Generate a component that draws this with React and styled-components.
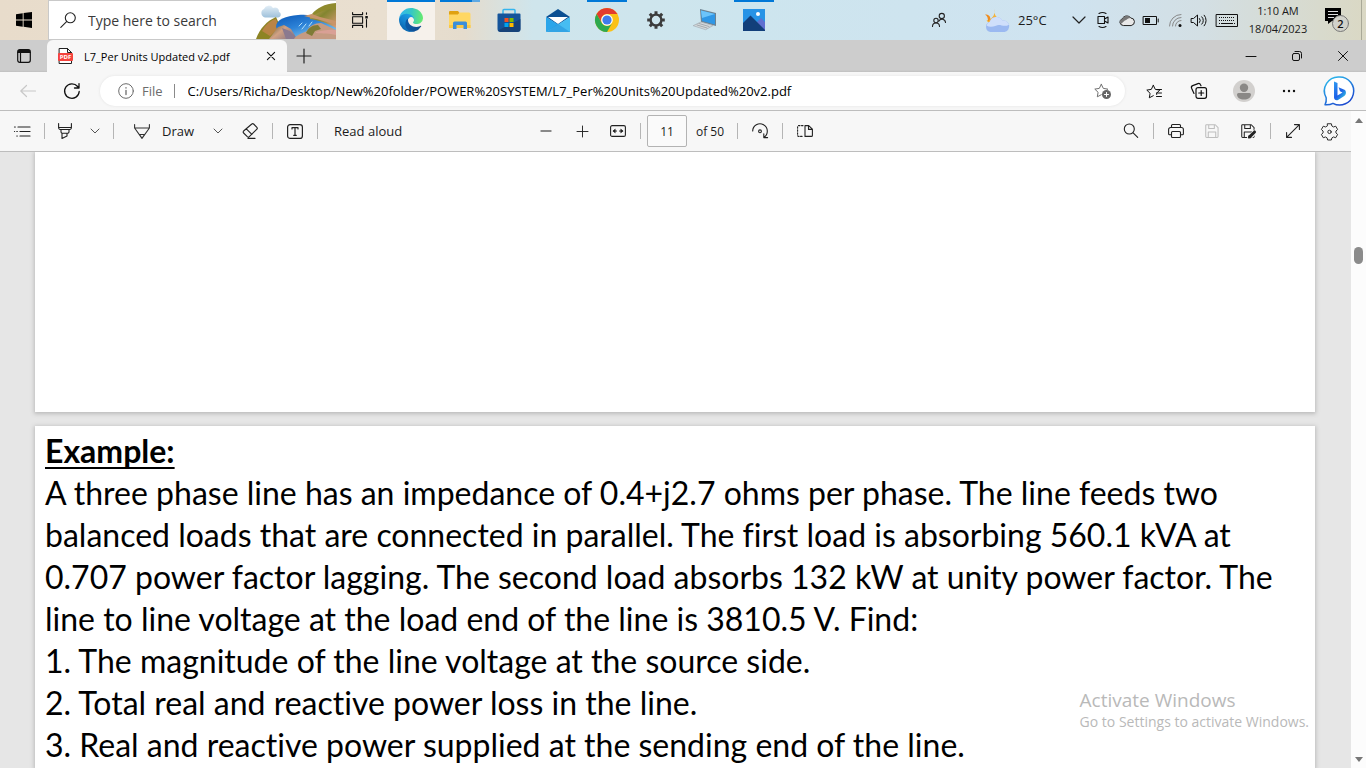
import React from "react";
import styled, { createGlobalStyle } from "styled-components";

const GlobalStyle = createGlobalStyle`
  body {
    margin: 0;
    overflow: hidden;
    font-family: "Open Sans", "Noto Sans", sans-serif;
    font-size: 12px;
    color: #1b1b1b;
  }
  button, input {
    font: inherit;
    color: inherit;
  }
`;

const Screen = styled.div`
  height: 100vh;
  display: flex;
  flex-direction: column;
`;

const Icon = styled.svg`
  display: block;
  flex: none;
  width: ${props => props.$w || 16}px;
  height: ${props => props.$h || props.$w || 16}px;
  fill: none;
  stroke: ${props => props.$color || "#222"};
  stroke-width: ${props => props.$stroke || 1};
  stroke-linecap: round;
  stroke-linejoin: round;
  overflow: visible;
`;

const PlainButton = styled.button`
  display: flex;
  align-items: center;
  justify-content: center;
  flex: none;
  border: 0;
  padding: 0;
  background: none;
`;

/* ---------- taskbar ---------- */

const Taskbar = styled.header`
  display: flex;
  flex: none;
  height: 40px;
  background: linear-gradient(
    90deg,
    #e8dccb 0%,
    #e9dfd0 28%,
    #e5dccd 34%,
    #cfe5ec 39%,
    #cde5ee 55%,
    #cfe3f0 78%,
    #d3dfe4 88%,
    #dad8c4 100%
  );
`;

const TaskCell = styled(PlainButton)`
  position: relative;
  width: ${props => props.$w || 48}px;
  height: 40px;
  background: ${props => (props.$active ? "#f6f1eb" : "none")};
  &::before {
    content: "";
    position: absolute;
    top: 0;
    left: ${props => (props.$active ? 0 : 4)}px;
    right: ${props => (props.$active ? 0 : 4)}px;
    height: 2px;
    background: ${props =>
      props.$stacked
        ? "linear-gradient(90deg, #0078d7 80%, #5ea9e4 80%)"
        : props.$active || props.$open
        ? "#0078d7"
        : "none"};
  }
`;

const SearchBox = styled.label`
  display: flex;
  align-items: center;
  box-sizing: border-box;
  width: 288px;
  height: 40px;
  border: 1px solid #c9c9c9;
  border-right: 0;
  padding-left: 11px;
  background: white;
`;

const SearchInput = styled.input`
  flex: 1;
  min-width: 0;
  margin-left: 12px;
  border: 0;
  padding: 0;
  outline: 0;
  background: none;
  font-size: 14px;
  &::placeholder {
    color: #3a3a3a;
    opacity: 1;
  }
`;

const Pinned = styled.nav`
  display: flex;
  gap: 1px;
  margin-left: 3px;
`;

const Tray = styled.div`
  display: flex;
  margin-left: auto;
`;

const Weather = styled(PlainButton)`
  gap: 8px;
  justify-content: flex-start;
  width: 87px;
  margin-left: 17px;
  padding-left: 5px;
  font-size: 13px;
`;

const Clock = styled.time`
  display: flex;
  flex-direction: column;
  justify-content: center;
  width: 70px;
  text-align: center;
  font-size: 11px;
  line-height: 18px;
`;

const Notifications = styled(TaskCell)`
  border-right: 1px solid #a9a998;
  margin-right: 4px;
`;

/* ---------- browser chrome ---------- */

const TabStrip = styled.div`
  display: flex;
  flex: none;
  height: 32px;
  background: linear-gradient(#cdcdcd 94%, #bfbfbf);
`;

const StripButton = styled(PlainButton)`
  width: ${props => props.$w || 46}px;
`;

const Tab = styled.div`
  display: flex;
  align-items: center;
  box-sizing: border-box;
  width: 240px;
  border-radius: 6px 6px 0 0;
  padding: 0 8px 0 11px;
  background: #f7f7f7;
`;

const TabTitle = styled.span`
  flex: 1;
  margin-left: 11px;
  color: black;
  font-size: 11px;
`;

const WindowButtons = styled.div`
  display: flex;
  margin-left: auto;
`;

const AddressRow = styled.div`
  display: flex;
  align-items: center;
  flex: none;
  box-sizing: border-box;
  height: 39px;
  border-bottom: 1px solid #bdbdbd;
  padding-left: 6px;
  background: #f7f7f7;
`;

const NavButton = styled(PlainButton)`
  width: ${props => props.$w || 45}px;
  height: 36px;
`;

const AddressPill = styled.label`
  display: flex;
  align-items: center;
  flex: 1;
  box-sizing: border-box;
  height: 30px;
  margin: 0 6px;
  border-radius: 15px;
  padding: 0 14px 0 18px;
  background: white;
  box-shadow: 0 0 3px #e2e2e2;
`;

const Scheme = styled.span`
  margin-left: 8px;
  border-right: 1px solid #8a8a8a;
  padding-right: 11px;
  color: #6c6c6c;
  font-size: 13px;
  line-height: 14px;
`;

const AddressInput = styled.input`
  flex: 1;
  min-width: 0;
  border: 0;
  padding: 0 0 0 13px;
  outline: 0;
  background: none;
  color: black;
  font-size: 13px;
`;

/* ---------- pdf viewer ---------- */

const Main = styled.main`
  position: relative;
  display: flex;
  flex: 1;
  min-height: 0;
`;

const Viewer = styled.section`
  display: flex;
  flex-direction: column;
  flex: 1;
  min-width: 0;
  background: #e6e6e6;
`;

const PdfToolbar = styled.div`
  position: relative;
  z-index: 1;
  display: grid;
  grid-template-columns: 1fr auto 1fr;
  flex: none;
  height: 40px;
  border-bottom: 1px solid #bdbdbd;
  padding: 0 4px;
  background: #f7f7f7;
`;

const ToolGroup = styled.div`
  display: flex;
  align-items: center;
  justify-content: ${props => props.$align || "flex-start"};
`;

const Tool = styled(PlainButton)`
  width: ${props => props.$w || 36}px;
  height: 32px;
`;

const TextTool = styled(PlainButton)`
  gap: 12px;
  height: 32px;
  padding: ${props => (props.$split ? "0 10px 0 16px" : "0 12px")};
  font-size: 13px;
`;

const Divider = styled.span`
  flex: none;
  width: 1px;
  height: 16px;
  margin: 0 4px;
  background: #b5b5b5;
`;

const PageInput = styled.input`
  box-sizing: border-box;
  width: 40px;
  height: 32px;
  margin-left: 2px;
  border: 1px solid #b3b3b3;
  border-radius: 2px;
  padding: 0;
  background: #fafafa;
  text-align: center;
`;

const PageCount = styled.span`
  width: 46px;
  text-align: center;
`;

const Pages = styled.div`
  display: flex;
  flex-direction: column;
  gap: 14px;
  flex: 1;
  min-height: 0;
  padding: 0 36px 0 35px;
`;

const Page = styled.article`
  box-sizing: border-box;
  flex: ${props => (props.$last ? "1 0 0" : "0 0 260px")};
  min-height: 0;
  padding: 4px 10px 0;
  background: white;
  box-shadow: 0 1px 4px 1px #bcbcbc;
  color: black;
  font-family: Lato, "Open Sans", sans-serif;
  font-size: 32px;
  font-variant-ligatures: none;
  line-height: 42px;
  white-space: nowrap;
`;

const Heading = styled.h1`
  margin: 0;
  font-size: inherit;
  text-decoration: underline;
  text-decoration-thickness: 2px;
  text-underline-offset: 4px;
  text-decoration-skip-ink: none;
`;

const Paragraph = styled.p`
  margin: 0;
`;

const Line = styled.span`
  display: block;
`;

const Scrollbar = styled.div`
  display: flex;
  flex-direction: column;
  align-items: center;
  justify-content: space-between;
  width: 15px;
  padding: 7px 0 6px;
  box-sizing: border-box;
  background: #fcfcfc;
`;

const ScrollTrack = styled.div`
  flex: 1;
  padding-top: 124px;
`;

const Thumb = styled.div`
  width: 9px;
  height: 17px;
  border-radius: 5px;
  background: #8b8b8b;
`;

const Watermark = styled.aside`
  position: absolute;
  right: 57px;
  bottom: 36px;
  color: #b9b9b9;
  font-size: 14px;
  line-height: 20px;
`;

const WatermarkTitle = styled.div`
  font-size: 19px;
  line-height: 24px;
`;

/* ---------- icons ---------- */

const Chevron = ({ size = 8, color = "#555", stroke = 1 }) => (
  <Icon $w={size} $h={size / 2} viewBox="0 0 8 4" $color={color} $stroke={stroke}>
    <path d="M0 0l4 4 4-4" />
  </Icon>
);

const WindowsLogo = () => (
  <Icon $w={16} viewBox="0 0 16 16" $color="none">
    <path
      fill="#000"
      d="M0 2.2l6.7-1v6.3H0zM7.6 1.1L16 0v7.5H7.6zM0 8.4h6.7v6.3L0 13.7zM7.6 8.4H16V16l-8.4-1.2z"
    />
  </Icon>
);

const Magnifier = ({ flip, size = 16 }) => (
  <Icon $w={size} viewBox="0 0 16 16" $color="#222" $stroke={1.1}>
    {flip ? (
      <path d="M15.3 5.8a5 5 0 1 1-10 0 5 5 0 0 1 10 0zM6.8 9.4L.8 15.4" />
    ) : (
      <path d="M11.3 6a5 5 0 1 1-10 0 5 5 0 0 1 10 0zM9.9 9.6l4.8 4.8" />
    )}
  </Icon>
);

const SearchArt = () => (
  <Icon $w={80} $h={38} viewBox="0 0 80 38" $color="none">
    <defs>
      <linearGradient id="lake" x1="0" y1="0" x2="0.7" y2="1">
        <stop offset="0" stopColor="#0b58b8" />
        <stop offset="0.5" stopColor="#2d83d8" />
        <stop offset="1" stopColor="#8fd0ee" />
      </linearGradient>
      <linearGradient id="hill" x1="0" y1="0" x2="1" y2="1">
        <stop offset="0" stopColor="#d7a765" />
        <stop offset="0.45" stopColor="#83852f" />
        <stop offset="1" stopColor="#dc9b79" />
      </linearGradient>
      <linearGradient id="rock" x1="0" y1="0" x2="1" y2="0.6">
        <stop offset="0" stopColor="#555b31" />
        <stop offset="0.5" stopColor="#d1a184" />
        <stop offset="1" stopColor="#8e7b85" />
      </linearGradient>
      <linearGradient id="puff" x1="0" y1="0" x2="0" y2="1">
        <stop offset="0" stopColor="#e3eef6" />
        <stop offset="1" stopColor="#9fc1db" />
      </linearGradient>
    </defs>
    <path
      fill="url(#puff)"
      d="M9 16.500a4.500 4.500 0 0 1-1-8.500 5 5 0 0 1 9-1 4 4 0 0 1 6 4c3 1 2 5.500-1 5.500z"
    />
    <path fill="#8d8424" d="M0 38c4-11 11-18 20-22l10 22z" />
    <path fill="#b98445" d="M6 30c4-7 9-11 14-12l3 9-9 8z" />
    <path fill="url(#lake)" d="M20 26c0-8 10-11 22-12s24 1 38 11v13H26z" />
    <path
      stroke="#b8e2fa"
      strokeWidth="1"
      d="M43 25l3-3M46 28l4-5M53 25l3-4M55 28l3-3"
    />
    <path fill="url(#hill)" d="M54 14c6-1 6-5 12-5 4-3 8-4 14-4v22c-7-4-14-7-26-9z" />
    <path fill="#8f8a2d" d="M56 13c5-6 12-10 24-11v7c-8-2-14 1-22 5z" />
    <path fill="#c9956a" d="M48 15l8-2 8 3 16 4v4l-16-5z" />
    <path fill="url(#rock)" d="M13 38l9-12 6-2 7 4 6 10z" />
    <path fill="#8b7a8f" d="M30 38l-4-11 8 3 7 8z" />
    <path fill="#c59b82" d="M38 38c2-4 9-6 13-8 2-5 8-8 14-8l15 7v9z" />
    <path fill="#7e7b36" d="M50 32c2-5 6-8 12-8l3 4-6 2-3 5z" />
    <path fill="#d9a095" d="M60 31c6-1 12-3 20-2v5c-7-2-13-1-20-2z" />
  </Icon>
);

const TaskView = () => (
  <Icon $w={16} viewBox="0 0 16 16" $color="#111" $stroke={1.1}>
    <path d="M.6.6v2h10v-2M.6 15.400v-2h10v2M.6 4.800h10v6.400H.6zM14.500.8v1.500M14.500 7.500v7.600" />
    <path fill="#111" stroke="none" d="M13.300 4h2.500v2.500h-2.500z" />
  </Icon>
);

const EdgeLogo = () => (
  <Icon $w={24} viewBox="0 0 256 256" $color="none">
    <defs>
      <linearGradient id="e1" x1="0.2" y1="0.7" x2="1" y2="0.7">
        <stop offset="0" stopColor="#0c59a4" />
        <stop offset="1" stopColor="#114a8b" />
      </linearGradient>
      <linearGradient id="e2" x1="0.8" y1="0.2" x2="0.3" y2="1">
        <stop offset="0" stopColor="#1b9de2" />
        <stop offset="0.5" stopColor="#1383cf" />
        <stop offset="1" stopColor="#0860a8" />
      </linearGradient>
      <linearGradient id="e3" x1="0" y1="0.4" x2="1" y2="0.5">
        <stop offset="0" stopColor="#35b8f1" />
        <stop offset="0.5" stopColor="#36c7c4" />
        <stop offset="1" stopColor="#66eb6e" />
      </linearGradient>
    </defs>
    <path
      fill="url(#e1)"
      d="M231 190.500c-3.400 1.800-6.900 3.400-10.500 4.700a101.500 101.500 0 0 1-35.900 6.500c-47.300 0-88.500-32.500-88.500-74.300 0-11.400 6.400-21.900 16.400-27.300-42.800 1.800-53.800 46.400-53.800 72.500 0 74 68.100 81.400 82.800 81.400 7.900 0 19.800-2.300 27-4.600l1.300-.4a128.300 128.300 0 0 0 66.600-52.800 4 4 0 0 0-5.400-5.700z"
    />
    <path
      fill="url(#e2)"
      d="M105.700 241.400a79.200 79.200 0 0 1-22.700-21.300 80.700 80.700 0 0 1 29.500-120c3.100-1.500 8.500-4.100 15.600-4a32.400 32.400 0 0 1 25.700 13 31.900 31.900 0 0 1 6.300 18.700c0-.2 24.500-79.600-80-79.600-43.900 0-80 41.700-80 78.200a130.200 130.200 0 0 0 12.100 56 128 128 0 0 0 156.400 67 75.500 75.500 0 0 1-62.800-8z"
    />
    <path
      fill="url(#e3)"
      d="M152.300 148.900c-.8 1-3.300 2.500-3.300 5.700 0 2.600 1.700 5.100 4.700 7.200 14.400 10 41.500 8.700 41.600 8.700 10.700 0 21.100-2.900 30.300-8.300a61.400 61.400 0 0 0 30.400-52.900c.3-22.400-8-37.300-11.300-43.900C223.500 23.900 177.700 0 128 0A128 128 0 0 0 0 126.200c.5-36.500 36.800-66 80-66 3.500 0 23.500.3 42 10.100 16.300 8.600 24.900 19 30.800 29.200 6.200 10.700 7.300 24.100 7.300 29.500s-2.700 13.300-7.800 19.900z"
    />
  </Icon>
);

const Explorer = () => (
  <Icon $w={22} $h={18} viewBox="0 0 22 18" $color="none">
    <path fill="#e0a211" d="M0 1a1 1 0 0 1 1-1h8l1.500 2L9 4H0z" />
    <path fill="#ffd763" d="M0 3.500h9L10.500 1.500H20a1.500 1.500 0 0 1 1.500 1.500v14H0z" />
    <path fill="#f9c846" d="M0 14h21.500v3H0z" />
    <path fill="#3b8fd9" d="M4 18v-6a1.500 1.500 0 0 1 1.500-1.500h11A1.500 1.500 0 0 1 18 12v6h-3.500v-4h-7v4z" />
  </Icon>
);

const Store = () => (
  <Icon $w={24} viewBox="0 0 24 24" $color="none">
    <path stroke="#35b5ee" strokeWidth="1.500" d="M6 6V2.500A1 1 0 0 1 7 1.500h10a1 1 0 0 1 1 1V6" />
    <path fill="#15549a" d="M.5 6.500a1 1 0 0 1 1-1h21a1 1 0 0 1 1 1V21a3 3 0 0 1-3 3h-17a3 3 0 0 1-3-3z" />
    <path fill="#173a69" d="M23.500 11v10a3 3 0 0 1-3 3h-17a3 3 0 0 1-2.500-1.500z" opacity=".7" />
    <path fill="#f25022" d="M7.500 10h4v4h-4z" />
    <path fill="#7fba00" d="M12.500 10h4v4h-4z" />
    <path fill="#00a4ef" d="M7.500 15h4v4h-4z" />
    <path fill="#ffb900" d="M12.500 15h4v4h-4z" />
  </Icon>
);

const Mail = () => (
  <Icon $w={24} $h={23} viewBox="0 0 24 23" $color="none">
    <path fill="#0b4f92" d="M0 8l12-8 12 8-12 8z" />
    <path fill="#fff" d="M2 8h20l-10 7z" />
    <path fill="#2aa5ea" d="M0 8l13 8L0 23z" />
    <path fill="#46bdf2" d="M24 8v15H0z" />
    <path fill="#1b86d4" d="M24 23H0l12-8z" opacity=".45" />
  </Icon>
);

const Chrome = () => (
  <Icon $w={24} viewBox="0 0 24 24" $color="none">
    <circle cx="12" cy="12" r="12" fill="#fbc116" />
    <path fill="#e33b2e" d="M1.600 6A12 12 0 0 1 22.400 6H12a6 6 0 0 0-5.200 9z" />
    <path fill="#2da94f" d="M1.600 6A12 12 0 0 0 12 24l5.200-9A6 6 0 0 1 6.800 15z" />
    <circle cx="12" cy="12" r="5.800" fill="#fff" />
    <circle cx="12" cy="12" r="4.600" fill="#3f7bea" />
  </Icon>
);

const SettingsGear = () => (
  <Icon $w={18} viewBox="0 0 18 18" $color="#3c3c3c">
    <circle cx="9" cy="9" r="5.400" strokeWidth="2.400" />
    <path
      strokeWidth="3"
      strokeLinecap="butt"
      d="M9 .2v3M9 14.800v3M.2 9h3M14.800 9h3M2.800 2.800l2.100 2.100M13.100 13.100l2.100 2.100M2.800 15.200l2.100-2.100M13.100 4.900l2.100-2.100"
    />
  </Icon>
);

const Laptop = () => (
  <Icon $w={24} $h={22} viewBox="0 0 24 22" $color="none">
    <path fill="#6c8190" d="M7 0l16 4v13L8 13z" />
    <path fill="#2f97e6" d="M8 1.500l14 3.500v10.500L9 12z" />
    <path fill="#6cc4fb" d="M8 1.500l14 3.500L9 9z" />
    <path fill="#d5d9dc" stroke="#a4abb0" strokeWidth=".7" d="M.5 16.500L8 13l12 3.500L13 20.500z" />
    <path stroke="#8e969b" strokeWidth=".7" d="M4 16l10 3M6 14.500l10 3" />
  </Icon>
);

const Photos = () => (
  <Icon $w={22} viewBox="0 0 22 22" $color="none">
    <path fill="#2793e6" d="M0 0h22v22H0z" />
    <path fill="#5f6fd0" d="M12 15l6-6 4 4v9h-4z" />
    <path fill="#123f7a" d="M0 14l7.500-7.500L22 21v1H0z" />
    <circle cx="15" cy="5" r="2" fill="#fff" />
  </Icon>
);

const People = () => (
  <Icon $w={14} viewBox="0 0 14 14" $color="#222" $stroke={1.1}>
    <circle cx="9.800" cy="3" r="2.600" />
    <circle cx="4" cy="7.500" r="2.200" />
    <path d="M6.800 8.300a3.500 3.500 0 0 1 6.700 1.200M.5 13.500a3.500 3.500 0 0 1 7 0" />
  </Icon>
);

const WeatherIcon = () => (
  <Icon $w={25} $h={23} viewBox="0 0 25 23" $color="none">
    <path fill="#f6b336" d="M10 0c-1 5 0 8 5 9.500L13 14H4L1.500 11.500C7 11 10 6 10 0z" />
    <path fill="#f08c1d" d="M0 5.500c4 0 5 1.500 5.500 4.500L3 12.500C3 9 2.500 7 0 5.500z" />
    <path
      fill="#9bb9f1"
      d="M5.500 23a5.300 5.300 0 0 1-.7-10.300 7 7 0 0 1 12.700-1A5.700 5.700 0 0 1 19.500 23z"
    />
    <path
      fill="#cfdffb"
      d="M1.500 16.500a5 5 0 0 1 3.300-3.800 7 7 0 0 1 12.700-1 5.700 5.700 0 0 1 6.500 4c-5 3-9-1-13 1-4 1.500-7 1.500-9.500-.2z"
    />
  </Icon>
);

const MeetNow = () => (
  <Icon $w={12} $h={16} viewBox="0 0 12 16" $color="#111" $stroke={1.1}>
    <path d="M1 4.500h6.500v7H1zM7.500 7L11 5v6L7.500 9M2 1.500C4 .3 7 .3 9 1.500M2 14.500c2 1.200 5 1.200 7 0" />
  </Icon>
);

const Cloud = () => (
  <Icon $w={16} $h={11} viewBox="0 0 16 11" $color="#222">
    <path
      fill="#e8e8e8"
      d="M4 10.500a3.400 3.400 0 0 1-.8-6.600A5 5 0 0 1 11.800 3a3.800 3.800 0 0 1 .7 7.500z"
    />
    <path
      fill="#777"
      stroke="none"
      d="M3.200 3.900A5 5 0 0 1 11.800 3c-3 0-4 2-6 2.500L2 9C.5 7 .5 5 3.200 3.900z"
    />
  </Icon>
);

const Battery = () => (
  <Icon $w={16} $h={9} viewBox="0 0 16 9" $color="#111">
    <path d="M.5.5h13v8H.5zM15.200 3v3" />
    <path fill="#111" stroke="none" d="M2 2h5v5H2z" />
  </Icon>
);

const Wifi = () => (
  <Icon $w={13} viewBox="0 0 13 13" $color="#888">
    <path d="M.5 12A11.500 11.500 0 0 1 12 .5M3.500 12A8.500 8.500 0 0 1 12 3.500M6.500 12A5.500 5.500 0 0 1 12 6.500" />
    <circle cx="11" cy="11.500" r="1.500" fill="#111" stroke="none" />
  </Icon>
);

const Volume = () => (
  <Icon $w={16} $h={13} viewBox="0 0 16 13" $color="#111">
    <path d="M.5 4.500h2L6.500 1v11l-4-3.500h-2zM8.500 4.500a3 3 0 0 1 0 4M10.800 2.800a5 5 0 0 1 0 7.400M13.200 1.200a8 8 0 0 1 0 10.600" />
  </Icon>
);

const Keyboard = () => (
  <Icon $w={22} $h={13} viewBox="0 0 22 13" $color="#111">
    <path d="M.5.5h21v12H.5z" />
    <path strokeLinecap="butt" strokeDasharray="1 1" d="M3 3.500h16M3 6.500h16" />
    <path strokeLinecap="butt" d="M5 9.500h12M3 9.500h1M18 9.500h1" />
  </Icon>
);

const NotificationIcon = () => (
  <Icon $w={24} viewBox="0 0 24 24" $color="none">
    <path fill="#000" d="M0 0h16v13H7l-4 3v-3H0z" />
    <path stroke="#ddd" strokeLinecap="butt" d="M3 3.500h10M3 6.500h10M3 9.500h6" />
    <circle cx="15.500" cy="15.500" r="8" fill="#d2d2ca" stroke="#777" />
    <text x="15.500" y="19.500" textAnchor="middle" fill="#111" fontSize="11" fontWeight="600">
      2
    </text>
  </Icon>
);

const WorkspaceIcon = () => (
  <Icon $w={14} viewBox="0 0 14 14" $color="#111" $stroke={1.2}>
    <rect x=".7" y=".7" width="12.600" height="12.600" rx="2" />
    <path d="M.7 3.500h12.600M3.500 3.500v9.500" />
    <path fill="#111" stroke="none" d="M1 1h12v2.500H1z" />
  </Icon>
);

const PdfFile = () => (
  <Icon $w={15} $h={16} viewBox="0 0 15 16" $color="#222">
    <path fill="#fff" d="M1.500.5h8l4 4v11h-12zM9.500.5v4h4" />
    <rect x="0" y="5" width="15" height="8" rx="1" fill="#f5433d" stroke="none" />
    <text x="7.500" y="11.300" textAnchor="middle" fill="#fff" stroke="none" fontSize="6" fontWeight="700">
      PDF
    </text>
  </Icon>
);

const Cross = ({ size = 8, stroke = 1.4 }) => (
  <Icon $w={size} viewBox="0 0 10 10" $color="#111" $stroke={stroke}>
    <path d="M.5.5l9 9M9.500.5l-9 9" />
  </Icon>
);

const Plus = ({ size = 14 }) => (
  <Icon $w={size} viewBox="0 0 14 14" $color="#222" $stroke={1.2}>
    <path d="M7 0v14M0 7h14" />
  </Icon>
);

const Star = () => (
  <path
    d="M6.800.8l2 4.100 4.500.7-3.300 3.200.2 1.200M6.800.8l-2 4.100-4.500.7 3.300 3.200-.8 4.500 4-2.100"
    transform="translate(.5 .5)"
  />
);

const BingLogo = () => (
  <Icon $w={30} viewBox="0 0 30 30" $color="none">
    <defs>
      <linearGradient id="bingRing" x1="0" y1="0" x2="0.6" y2="1">
        <stop offset="0" stopColor="#2cc3ee" />
        <stop offset="1" stopColor="#1b4bd0" />
      </linearGradient>
      <linearGradient id="bingB" x1="0" y1="0" x2="0.8" y2="1">
        <stop offset="0" stopColor="#2f9df0" />
        <stop offset="0.6" stopColor="#1d5fe8" />
        <stop offset="1" stopColor="#2fc7dd" />
      </linearGradient>
    </defs>
    <path
      fill="#fff"
      stroke="url(#bingRing)"
      strokeWidth="1.500"
      d="M15.500 1a14 14 0 1 1-6.500 26.300C6 29 3.500 29 1 28.800c1.200-2 1.500-4 1.200-7A14 14 0 0 1 15.500 1z"
    />
    <path
      fill="url(#bingB)"
      d="M10 5.500l3.500 1.500v12.500l5-3-2.500-1.200-1.500-4 6.500 2.700c2 2.800.5 5.500-1.500 6.600L14 24c-2 1-4-.5-4-2.500z"
    />
  </Icon>
);

const SaveShape = () => (
  <path d="M1.500.8h9.500l3 3v9.700a1 1 0 0 1-1 1H1.800a1 1 0 0 1-1-1V1.500a.7.700 0 0 1 .7-.7zM4 .8v4h6v-4M3.500 14.500V8.500h8v6" />
);

const GearOutline = () => (
  <Icon $w={17} viewBox="0 0 18 18" $color="#222">
    <path d="M7 .8h4l.5 2.400 1.700 1 2.400-.8 2 3.500-1.800 1.600v2l1.800 1.600-2 3.500-2.400-.8-1.700 1-.5 2.200H7l-.5-2.200-1.700-1-2.400.8-2-3.500 1.800-1.600v-2L.4 6.900l2-3.500 2.400.8 1.700-1z" />
    <circle cx="9" cy="9.400" r="1.800" />
  </Icon>
);

const pinnedApps = [
  { name: "Microsoft Edge", icon: <EdgeLogo />, active: true },
  { name: "File Explorer", icon: <Explorer />, stacked: true },
  { name: "Microsoft Store", icon: <Store /> },
  { name: "Mail", icon: <Mail /> },
  { name: "Google Chrome", icon: <Chrome />, open: true },
  { name: "Settings", icon: <SettingsGear /> },
  { name: "This PC", icon: <Laptop /> },
  { name: "Photos", icon: <Photos />, open: true }
];

const trayIcons = [
  { name: "Show hidden icons", icon: <Chevron size={12} color="#222" stroke={0.8} /> },
  { name: "Meet Now", icon: <MeetNow /> },
  { name: "OneDrive", icon: <Cloud /> },
  { name: "Battery", icon: <Battery /> },
  { name: "Network", icon: <Wifi /> },
  { name: "Volume", icon: <Volume /> }
];

const exampleLines = [
  "A three phase line has an impedance of 0.4+j2.7 ohms per phase. The line feeds two",
  "balanced loads that are connected in parallel. The first load is absorbing 560.1 kVA at",
  "0.707 power factor lagging. The second load absorbs 132 kW at unity power factor. The",
  "line to line voltage at the load end of the line is 3810.5 V. Find:",
  "1. The magnitude of the line voltage at the source side.",
  "2. Total real and reactive power loss in the line.",
  "3. Real and reactive power supplied at the sending end of the line."
];

const WindowsTaskbar = () => (
  <Taskbar>
    <TaskCell aria-label="Start">
      <WindowsLogo />
    </TaskCell>
    <SearchBox>
      <Magnifier flip />
      <SearchInput type="text" placeholder="Type here to search" />
      <SearchArt />
    </SearchBox>
    <TaskCell aria-label="Task View">
      <TaskView />
    </TaskCell>
    <Pinned>
      {pinnedApps.map(app => (
        <TaskCell
          key={app.name}
          aria-label={app.name}
          $active={app.active}
          $open={app.open}
          $stacked={app.stacked}
        >
          {app.icon}
        </TaskCell>
      ))}
    </Pinned>
    <Tray>
      <TaskCell aria-label="People">
        <People />
      </TaskCell>
      <Weather>
        <WeatherIcon />
        25°C
      </Weather>
      {trayIcons.map(item => (
        <TaskCell key={item.name} aria-label={item.name} $w={24}>
          {item.icon}
        </TaskCell>
      ))}
      <TaskCell aria-label="Touch keyboard" $w={32}>
        <Keyboard />
      </TaskCell>
      <Clock>
        <span>1:10 AM</span>
        <span>18/04/2023</span>
      </Clock>
      <Notifications aria-label="Notifications" $w={49}>
        <NotificationIcon />
      </Notifications>
    </Tray>
  </Taskbar>
);

const BrowserChrome = () => (
  <>
    <TabStrip>
      <StripButton $w={47} aria-label="Tab actions">
        <WorkspaceIcon />
      </StripButton>
      <Tab>
        <PdfFile />
        <TabTitle>L7_Per Units Updated v2.pdf</TabTitle>
        <StripButton $w={16} aria-label="Close tab">
          <Cross />
        </StripButton>
      </Tab>
      <StripButton $w={34} aria-label="New tab">
        <Plus />
      </StripButton>
      <WindowButtons>
        <StripButton aria-label="Minimize">
          <Icon $w={10} viewBox="0 0 10 10" $color="#111">
            <path d="M0 5.500h10" />
          </Icon>
        </StripButton>
        <StripButton aria-label="Restore">
          <Icon $w={10} viewBox="0 0 10 10" $color="#111">
            <rect x=".5" y="2.500" width="7" height="7" rx="1.500" />
            <path d="M3 .5h4.500a2 2 0 0 1 2 2V7" />
          </Icon>
        </StripButton>
        <StripButton aria-label="Close">
          <Cross size={10} stroke={1} />
        </StripButton>
      </WindowButtons>
    </TabStrip>
    <AddressRow>
      <NavButton $w={44} aria-label="Back">
        <Icon $w={16} $h={12} viewBox="0 0 16 12" $color="#c8c8c8" $stroke={1.2}>
          <path d="M15.500 6H.8M6.500.5L.8 6l5.700 5.500" />
        </Icon>
      </NavButton>
      <NavButton $w={44} aria-label="Refresh">
        <Icon $w={16} viewBox="0 0 16 16" $color="#111" $stroke={1.3}>
          <path d="M15.200 8.500A7.300 7.300 0 1 1 13.600 3.500L14.800 5M15 .6V5h-4.500" />
        </Icon>
      </NavButton>
      <AddressPill>
        <Icon $w={16} viewBox="0 0 16 16" $color="#6c6c6c">
          <circle cx="8" cy="8" r="7.300" />
          <path d="M8 7.300v4.200M8 4.700v.3" strokeWidth="1.300" />
        </Icon>
        <Scheme>File</Scheme>
        <AddressInput
          type="text"
          defaultValue="C:/Users/Richa/Desktop/New%20folder/POWER%20SYSTEM/L7_Per%20Units%20Updated%20v2.pdf"
        />
        <Icon $w={17} $h={16} viewBox="0 0 17 16" $color="#707070">
          <Star />
          <circle cx="12.500" cy="11.500" r="4.500" fill="#666" stroke="none" />
          <path stroke="#fff" d="M12.500 9.500v4M10.500 11.500h4" />
        </Icon>
      </AddressPill>
      <NavButton aria-label="Favorites">
        <Icon $w={16} $h={14} viewBox="0 0 16 14" $color="#111">
          <Star />
          <path d="M10.500 5.500h5M10.500 9h5M10.500 12.500h5" />
        </Icon>
      </NavButton>
      <NavButton aria-label="Collections">
        <Icon $w={16} viewBox="0 0 16 16" $color="#111" $stroke={1.2}>
          <rect x="5" y="4.700" width="10.500" height="10.600" rx="2" />
          <path d="M10.200 7.500v5M7.700 10h5M3 10.500L.6 5.200A2 2 0 0 1 1.700 2.600L7 .6a2 2 0 0 1 2.500 1.200l.5 1" />
        </Icon>
      </NavButton>
      <NavButton aria-label="Profile">
        <Icon $w={22} viewBox="0 0 22 22" $color="none">
          <circle cx="11" cy="11" r="11" fill="#d2d0ce" />
          <circle cx="11" cy="7.800" r="4.200" fill="#8a8886" />
          <path fill="#8a8886" d="M4 14.500a1.500 1.500 0 0 1 1.500-1.500h11a1.500 1.500 0 0 1 1.500 1.500c0 3-3 5-7 5s-7-2-7-5z" />
        </Icon>
      </NavButton>
      <NavButton aria-label="Settings and more">
        <Icon $w={14} $h={4} viewBox="0 0 14 4" $color="none">
          <g fill="#111">
            <circle cx="2" cy="2" r="1.200" />
            <circle cx="7" cy="2" r="1.200" />
            <circle cx="12" cy="2" r="1.200" />
          </g>
        </Icon>
      </NavButton>
      <NavButton $w={55} aria-label="Bing">
        <BingLogo />
      </NavButton>
    </AddressRow>
  </>
);

const ViewerToolbar = () => (
  <PdfToolbar>
    <ToolGroup>
      <Tool aria-label="Table of contents">
        <Icon $w={16} $h={11} viewBox="0 0 16 11" $color="#222" $stroke={1.2}>
          <path d="M4 1h12M6 5.500h10M6 10h10M.5 1h.8M.5 5.500h.1M2.800 5.500h.5M2.800 10h.5" />
        </Icon>
      </Tool>
      <Divider />
      <Tool $w={32} aria-label="Highlight">
        <Icon $w={14} $h={16} viewBox="0 0 14 16" $color="#222" $stroke={1.1}>
          <path d="M.6.6v4.400a2 2 0 0 0 1.400 1.500h10a2 2 0 0 0 1.400-1.500V.6M.6 4.500h12.800M3 6.500v2.200a1.500 1.500 0 0 0 1 1.500h6a1.500 1.500 0 0 0 1-1.500V6.500M4 10.200v5.200l5-2.300v-2.900" />
        </Icon>
      </Tool>
      <Tool $w={28} aria-label="Highlight colors">
        <Chevron />
      </Tool>
      <Divider />
      <TextTool $split>
        <Icon $w={16} $h={15} viewBox="0 0 16 15" $color="#333" $stroke={1.1}>
          <path d="M.6.6V4l7.400 10.400L15.400 4V.6M1 4h14M5.500 10.500L8 14.400l2.500-3.900z" />
        </Icon>
        Draw
      </TextTool>
      <Tool $w={28} aria-label="Pen options">
        <Chevron />
      </Tool>
      <Tool aria-label="Erase">
        <Icon $w={16} viewBox="0 0 16 16" $color="#222" $stroke={1.1}>
          <path d="M9.800 1a1.300 1.300 0 0 1 1.800 0l3.300 3.300a1.300 1.300 0 0 1 0 1.800l-7.600 7.600a1.500 1.500 0 0 1-2 0L1.600 10a1.500 1.500 0 0 1 0-2zM4.300 5.800l5.600 5.600M6 15.400h7" />
        </Icon>
      </Tool>
      <Divider />
      <Tool aria-label="Add text">
        <Icon $w={16} $h={15} viewBox="0 0 16 15" $color="#222" $stroke={1.2}>
          <rect x=".6" y=".6" width="14.800" height="13.800" rx="2.500" />
          <path d="M5 5V3.700h6V5M8 3.700v7.600M6.700 11.300h2.600" />
        </Icon>
      </Tool>
      <Divider />
      <TextTool>Read aloud</TextTool>
    </ToolGroup>
    <ToolGroup>
      <Tool aria-label="Zoom out">
        <Icon $w={10} viewBox="0 0 10 10" $color="#666" $stroke={1.4}>
          <path d="M0 5h10" />
        </Icon>
      </Tool>
      <Tool aria-label="Zoom in">
        <Plus size={11} />
      </Tool>
      <Tool aria-label="Fit to width">
        <Icon $w={16} $h={12} viewBox="0 0 16 12" $color="#222" $stroke={1.1}>
          <rect x=".6" y=".6" width="14.800" height="10.800" rx="1.500" />
          <path d="M3.300 6h3.200M9.500 6h3.200" />
          <path fill="#222" strokeWidth=".6" d="M5 4.300L3 6l2 1.700zM11 4.300L13 6l-2 1.700z" />
        </Icon>
      </Tool>
      <Divider />
      <PageInput type="text" aria-label="Page number" defaultValue="11" />
      <PageCount>of 50</PageCount>
      <Divider />
      <Tool aria-label="Rotate">
        <Icon $w={16} viewBox="0 0 16 16" $color="#222" $stroke={1.1}>
          <path d="M.7 8A7.300 7.300 0 1 1 12 14.200M11.800 10.800v3.800h3.800" />
          <circle cx="8" cy="8.300" r="1.400" />
        </Icon>
      </Tool>
      <Divider />
      <Tool aria-label="Page view">
        <Icon $w={16} $h={12} viewBox="0 0 16 12" $color="#222" $stroke={1.1}>
          <path d="M8 .6h3.700l3.700 3.600v6.200a1 1 0 0 1-1 1H8zM11.500.8v3.600h3.700" />
          <path strokeDasharray="1.500 1.500" d="M6 .6H1.600a1 1 0 0 0-1 1v8.800a1 1 0 0 0 1 1H6" />
        </Icon>
      </Tool>
    </ToolGroup>
    <ToolGroup $align="flex-end">
      <Tool aria-label="Find">
        <Magnifier />
      </Tool>
      <Divider />
      <Tool aria-label="Print">
        <Icon $w={16} $h={14} viewBox="0 0 16 14" $color="#222" $stroke={1.1}>
          <path d="M3.500 3.500v-2a1 1 0 0 1 1-1h7a1 1 0 0 1 1 1v2M3.500 10.800H1.600a1 1 0 0 1-1-1V5.500a2 2 0 0 1 2-2h10.800a2 2 0 0 1 2 2v4.300a1 1 0 0 1-1 1h-1.900" />
          <rect x="3.500" y="7.500" width="9" height="6" rx="1" />
        </Icon>
      </Tool>
      <Tool aria-label="Save">
        <Icon $w={14} viewBox="0 0 15 15" $color="#bdbdbd" $stroke={1.1}>
          <SaveShape />
        </Icon>
      </Tool>
      <Tool aria-label="Save as">
        <Icon $w={14} viewBox="0 0 15 15" $color="#222" $stroke={1.1}>
          <SaveShape />
          <path stroke="#f7f7f7" strokeWidth="5" d="M9 14.500l6-6" />
          <path strokeWidth="3.200" d="M9.500 13.500l5-5" />
          <path fill="#222" d="M8 15l.6-2.500 2 2z" />
        </Icon>
      </Tool>
      <Divider />
      <Tool aria-label="Full screen">
        <Icon $w={14} viewBox="0 0 14 14" $color="#222" $stroke={1.1}>
          <path d="M.6 13.400L13.400.6M8.500.6h4.900v4.900M.6 8.500v4.900h4.900" />
        </Icon>
      </Tool>
      <Tool aria-label="Viewer settings">
        <GearOutline />
      </Tool>
    </ToolGroup>
  </PdfToolbar>
);

const App = () => (
  <Screen>
    <GlobalStyle />
    <WindowsTaskbar />
    <BrowserChrome />
    <Main>
      <Viewer>
        <ViewerToolbar />
        <Pages>
          <Page />
          <Page $last>
            <Heading>Example:</Heading>
            <Paragraph>
              {exampleLines.map(line => (
                <Line key={line}>{line}</Line>
              ))}
            </Paragraph>
          </Page>
        </Pages>
      </Viewer>
      <Scrollbar>
        <Icon $w={8} $h={5} viewBox="0 0 8 5" $color="none">
          <path fill="#777" d="M0 5l4-5 4 5z" />
        </Icon>
        <ScrollTrack>
          <Thumb />
        </ScrollTrack>
        <Icon $w={8} $h={5} viewBox="0 0 8 5" $color="none">
          <path fill="#777" d="M0 0l4 5 4-5z" />
        </Icon>
      </Scrollbar>
      <Watermark>
        <WatermarkTitle>Activate Windows</WatermarkTitle>
        Go to Settings to activate Windows.
      </Watermark>
    </Main>
  </Screen>
);

export default App;
